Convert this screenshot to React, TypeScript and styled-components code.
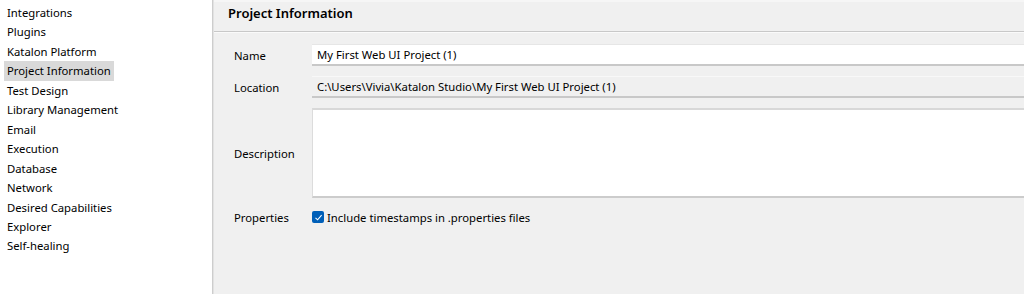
import React from "react";
import styled, { createGlobalStyle } from "styled-components";

const GlobalStyle = createGlobalStyle`
  html, body {
    margin: 0;
    padding: 0;
    overflow: hidden;
    background: #f0f0f0;
  }
  body {
    font-family: "Noto Sans", "Open Sans", sans-serif;
    font-size: 11.3px;
    color: #000;
  }
`;

const sections = [
  "Integrations",
  "Plugins",
  "Katalon Platform",
  "Project Information",
  "Test Design",
  "Library Management",
  "Email",
  "Execution",
  "Database",
  "Network",
  "Desired Capabilities",
  "Explorer",
  "Self-healing",
];

const Window = styled.div`
  display: flex;
  width: 1024px;
  height: 294px;
  overflow: hidden;
`;

const Sidebar = styled.ul`
  list-style: none;
  margin: 0;
  padding: 3px 0 0 4px;
  width: 208px;
  flex: none;
  background: #fff;
  border-right: 1px solid #cdcdcd;
`;

const NavItem = styled.li<{ $active?: boolean }>`
  display: table;
  height: 19.45px;
  line-height: 19.45px;
  padding: 0 3px;
  white-space: nowrap;
  background: ${p => (p.$active ? "#d9d9d9" : "transparent")};
`;

const Panel = styled.div`
  flex: 1;
  min-width: 0;
  background: #f0f0f0;
  border-left: 1px solid #e2e2e2;
`;

const Header = styled.h2`
  margin: 0;
  height: 32px;
  line-height: 23px;
  padding-left: 14px;
  font-size: 13px;
  font-weight: 600;
  border-top: 2px solid #f6f6f6;
  border-bottom: 1px solid #c8c8c8;
  box-sizing: border-box;
  box-shadow: 0 1px 0 #fafafa;
`;

const Form = styled.div`
  display: grid;
  grid-template-columns: 78px 1fr;
  grid-template-rows: 22px 22px 90px 18px;
  row-gap: 10px;
  align-items: center;
  padding: 12px 0 0 20px;
`;

const Label = styled.label`
  white-space: nowrap;
`;

const Field = styled.div<{ $disabled?: boolean }>`
  height: 100%;
  box-sizing: border-box;
  padding: 0 5px;
  line-height: 19px;
  white-space: nowrap;
  background: ${p => (p.$disabled ? "#f0f0f0" : "#fff")};
  border-top: 1px solid ${p => (p.$disabled ? "#f8f8f8" : "#e6e6e6")};
  border-bottom: 2px solid #c8c8c8;
`;

const TextArea = styled.div`
  height: 100%;
  box-sizing: border-box;
  background: #fff;
  border-top: 2px solid #d8d8d8;
  border-left: 1px solid #dcdcdc;
  border-bottom: 2px solid #cccccc;
`;

const Check = styled.div`
  display: flex;
  align-items: center;
  gap: 3px;
  white-space: nowrap;
`;

const Box = styled.span`
  width: 12px;
  height: 12px;
  border-radius: 2px;
  background: #005fb8;
  display: flex;
  align-items: center;
  justify-content: center;
`;

const App = () => (
  <>
    <GlobalStyle />
    <Window>
      <Sidebar>
        {sections.map(s => (
          <NavItem key={s} $active={s === "Project Information"}>
            {s}
          </NavItem>
        ))}
      </Sidebar>
      <Panel>
        <Header>Project Information</Header>
        <Form>
          <Label>Name</Label>
          <Field>My First Web UI Project (1)</Field>
          <Label>Location</Label>
          <Field $disabled>C:\Users\Vivia\Katalon Studio\My First Web UI Project (1)</Field>
          <Label>Description</Label>
          <TextArea />
          <Label>Properties</Label>
          <Check>
            <Box>
              <svg width="9" height="9" viewBox="0 0 9 9">
                <path d="M1.5 4.8 L3.6 6.8 L7.6 2.2" fill="none" stroke="#fff" strokeWidth="1.1" />
              </svg>
            </Box>
            Include timestamps in .properties files
          </Check>
        </Form>
      </Panel>
    </Window>
  </>
);

export default App;
